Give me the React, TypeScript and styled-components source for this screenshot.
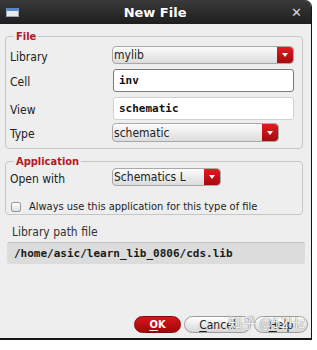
import React from "react";
import styled, { createGlobalStyle } from "styled-components";

const GlobalStyle = createGlobalStyle`
  html, body {
    margin: 0;
    padding: 0;
    background: #ffffff;
  }
  body {
    font-family: "DejaVu Sans Condensed", "DejaVu Sans", sans-serif;
    font-size: 12px;
    color: #222222;
  }
`;

const Window = styled.div`
  position: relative;
  width: 311px;
  height: 338px;
  border-right: 1px solid #151515;
  border-bottom: 2px solid #151515;
  border-top-right-radius: 7px;
  background: #eeeeee;
  display: flex;
  flex-direction: column;
  overflow: hidden;
`;

const TitleBar = styled.div`
  height: 24px;
  flex-shrink: 0;
  display: flex;
  align-items: center;
  padding: 0 9px 0 6px;
  background: linear-gradient(#3a3a3a, #1e1e1e);
`;

const WinIcon = styled.span`
  width: 13px;
  height: 9px;
  box-sizing: border-box;
  border: 1px solid #9aa4b4;
  border-top: 3px solid #5b86c8;
  background: #e6e9ee;
`;

const Title = styled.div`
  flex: 1;
  text-align: center;
  color: #ffffff;
  font-family: "DejaVu Sans", sans-serif;
  font-weight: bold;
  font-size: 13px;
`;

const Close = styled.span`
  color: #d8d8d8;
  font-family: "DejaVu Sans", sans-serif;
  font-weight: bold;
  font-size: 13px;
  line-height: 13px;
`;

const Group = styled.fieldset<{ $mt: number }>`
  margin: ${(p) => p.$mt}px 8px 0 5px;
  padding: 0;
  border: 1px solid #c6c6c6;
  border-radius: 4px;
  min-width: 0;
`;

const Legend = styled.legend`
  margin-left: 8px;
  padding: 0 2px;
  color: #b3181f;
  font-family: "DejaVu Sans Condensed", "DejaVu Sans", sans-serif;
  font-weight: bold;
  font-size: 11px;
  line-height: 13px;
`;

const GroupBody = styled.div<{ $pt: number; $pb: number }>`
  padding: ${(p) => p.$pt}px 0 ${(p) => p.$pb}px 0;
`;

const Row = styled.div<{ $h: number; $mt?: number }>`
  display: flex;
  align-items: center;
  height: ${(p) => p.$h}px;
  margin-top: ${(p) => p.$mt ?? 0}px;
`;

const Label = styled.span`
  width: 103px;
  padding-left: 4px;
  flex-shrink: 0;
  padding-top: 3px;
`;

const Select = styled.div<{ $w: number }>`
  width: ${(p) => p.$w}px;
  height: 100%;
  box-sizing: border-box;
  margin-left: -1px;
  display: flex;
  border: 1px solid #a8a8a8;
  border-radius: 4px;
  background: linear-gradient(#fcfcfc, #dcdcdc);
  overflow: hidden;
`;

const SelectText = styled.span`
  flex: 1;
  display: flex;
  align-items: center;
  padding-left: 1px;
  color: #222;
`;

const Arrow = styled.span`
  width: 16px;
  display: flex;
  align-items: center;
  justify-content: center;
  background: linear-gradient(#e01c20, #a40a0c);
  border-radius: 0 3px 3px 0;

  &::after {
    content: "";
    border-left: 3px solid transparent;
    border-right: 3px solid transparent;
    border-top: 4px solid #ffffff;
  }
`;

const TextBox = styled.div<{ $dark?: boolean }>`
  width: 181px;
  height: 100%;
  box-sizing: border-box;
  display: flex;
  align-items: center;
  padding-left: 5px;
  background: #ffffff;
  border: 1px solid ${(p) => (p.$dark ? "#7a7a7a" : "#d0d0d0")};
  border-radius: 3px;
  font-family: "DejaVu Sans Mono", monospace;
  font-weight: bold;
  font-size: 11px;
  color: #111;
`;

const Check = styled.span`
  width: 10px;
  height: 10px;
  box-sizing: border-box;
  margin-left: 5px;
  margin-right: 8px;
  border: 1px solid #9a9a9a;
  border-radius: 2px;
  background: linear-gradient(#ffffff, #dedede);
`;

const CheckText = styled.span`
  font-size: 11px;
`;

const PathLabel = styled.div`
  margin: 10px 0 0 12px;
  line-height: 14px;
  color: #333;
`;

const PathField = styled.div`
  margin: 3px 0 0 7px;
  width: 298px;
  height: 22px;
  box-sizing: border-box;
  display: flex;
  align-items: center;
  padding-left: 7px;
  background: #dcdcdc;
  border-top: 1px solid #c2c2c2;
  border-radius: 3px;
  font-family: "DejaVu Sans Mono", monospace;
  font-weight: bold;
  font-size: 11px;
  color: #1a1a1a;
`;

const Spacer = styled.div`
  flex: 1;
`;

const ButtonRow = styled.div`
  display: flex;
  justify-content: flex-end;
  gap: 3px;
  padding-right: 3px;
  margin-bottom: 5px;
`;

const Button = styled.div<{ $w: number; $primary?: boolean }>`
  width: ${(p) => p.$w}px;
  height: 17px;
  box-sizing: border-box;
  display: flex;
  align-items: center;
  justify-content: center;
  border-radius: 9px;
  border: 1px solid ${(p) => (p.$primary ? "#8a0608" : "#9c9c9c")};
  background: ${(p) =>
    p.$primary
      ? "linear-gradient(#d8161a, #a10709)"
      : "linear-gradient(#ffffff, #d6d6d6)"};
  color: ${(p) => (p.$primary ? "#ffffff" : "#222222")};
  font-weight: ${(p) => (p.$primary ? "bold" : "normal")};
  font-size: ${(p) => (p.$primary ? 11 : 12)}px;

  u {
    text-underline-offset: 2px;
  }
`;

const Watermark = styled.div`
  position: absolute;
  right: 6px;
  bottom: 6px;
  font-family: "Noto Sans CJK SC", sans-serif;
  font-size: 14px;
  color: rgba(255, 255, 255, 0.88);
  text-shadow: 0 0 1px #888, 0 0 1px #888;
  pointer-events: none;
`;

export default function App() {
  return (
    <>
      <GlobalStyle />
      <Window>
        <TitleBar>
          <WinIcon />
          <Title>New File</Title>
          <Close>✕</Close>
        </TitleBar>

        <Group $mt={6}>
          <Legend>File</Legend>
          <GroupBody $pt={3} $pb={6}>
            <Row $h={18}>
              <Label>Library</Label>
              <Select $w={182}>
                <SelectText>mylib</SelectText>
                <Arrow />
              </Select>
            </Row>
            <Row $h={23} $mt={5}>
              <Label>Cell</Label>
              <TextBox $dark>inv</TextBox>
            </Row>
            <Row $h={23} $mt={5}>
              <Label>View</Label>
              <TextBox>schematic</TextBox>
            </Row>
            <Row $h={19} $mt={3}>
              <Label>Type</Label>
              <Select $w={167}>
                <SelectText>schematic</SelectText>
                <Arrow />
              </Select>
            </Row>
          </GroupBody>
        </Group>

        <Group $mt={6}>
          <Legend>Application</Legend>
          <GroupBody $pt={0} $pb={1}>
            <Row $h={18}>
              <Label>Open with</Label>
              <Select $w={109}>
                <SelectText>Schematics L</SelectText>
                <Arrow />
              </Select>
            </Row>
            <Row $h={13} $mt={14}>
              <Check />
              <CheckText>Always use this application for this type of file</CheckText>
            </Row>
          </GroupBody>
        </Group>

        <PathLabel>Library path file</PathLabel>
        <PathField>/home/asic/learn_lib_0806/cds.lib</PathField>

        <Spacer />
        <ButtonRow>
          <Button $w={47} $primary>
            <span>
              <u>O</u>K
            </span>
          </Button>
          <Button $w={67}>
            <span>
              <u>C</u>ancel
            </span>
          </Button>
          <Button $w={54}>
            <span>
              <u>H</u>elp
            </span>
          </Button>
        </ButtonRow>
        <Watermark>知乎 @52Hz</Watermark>
      </Window>
    </>
  );
}
